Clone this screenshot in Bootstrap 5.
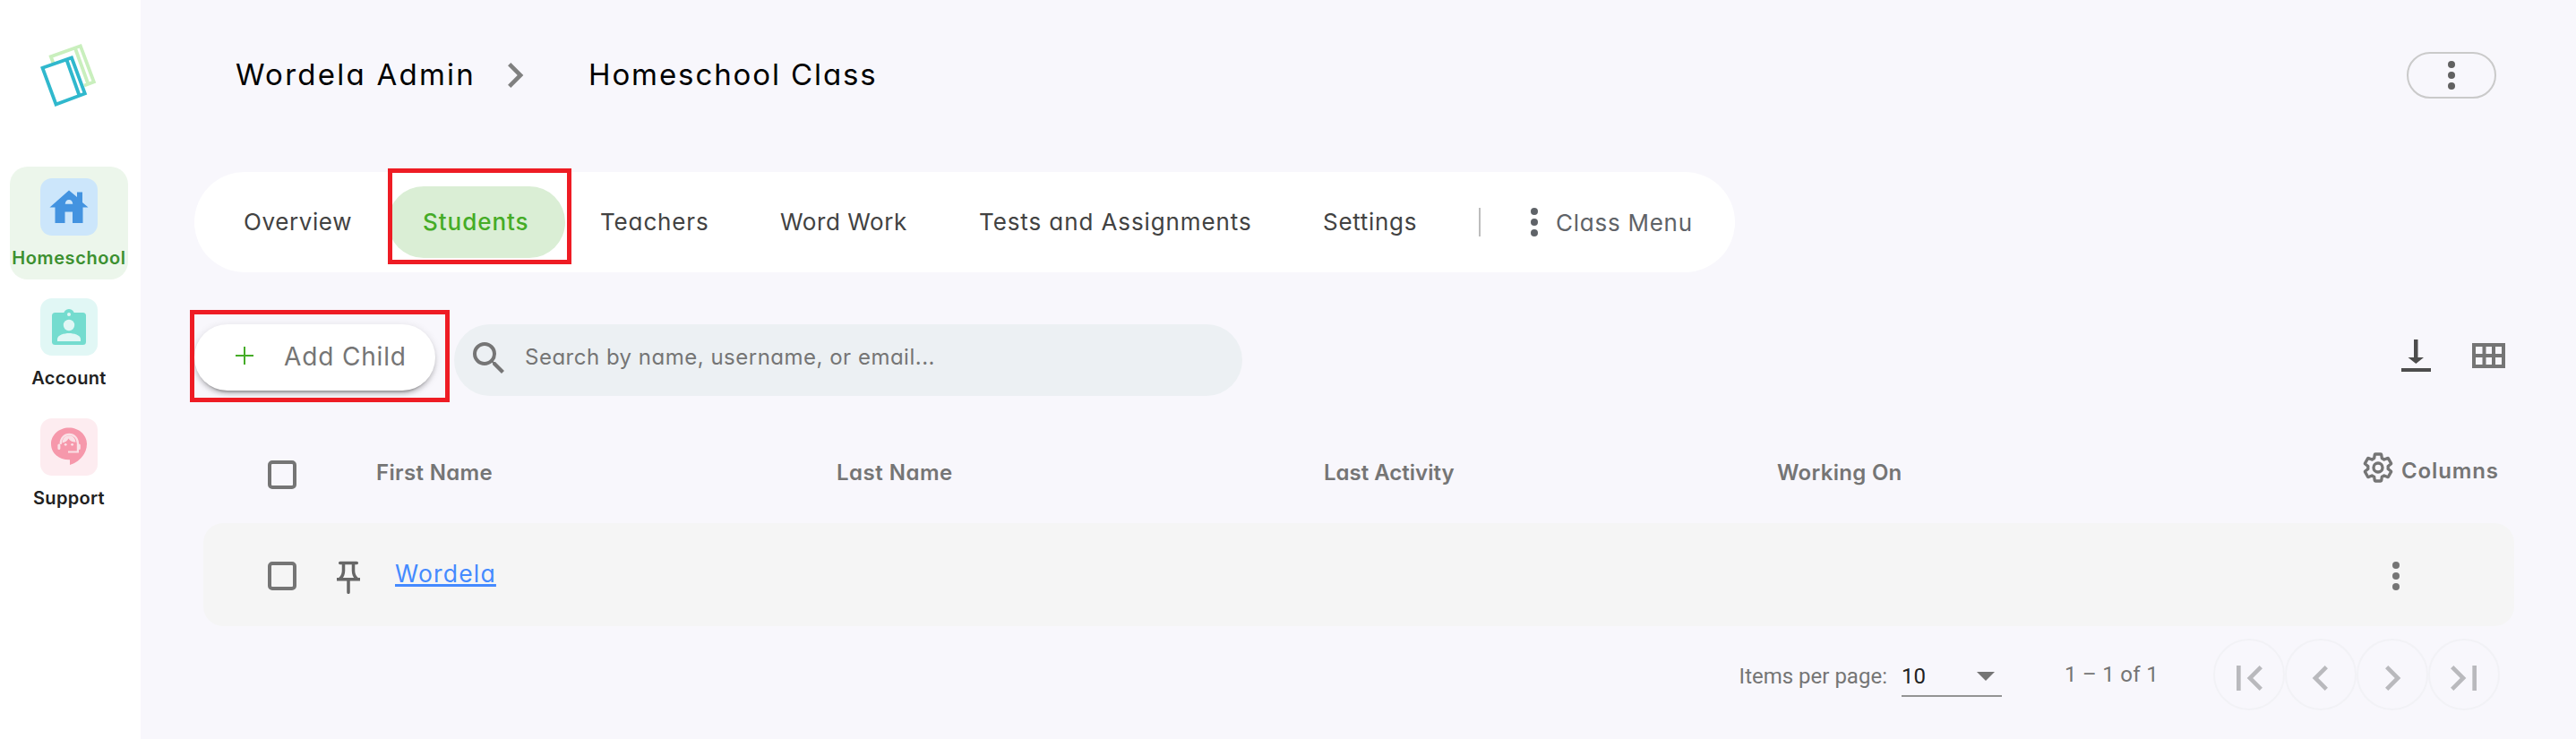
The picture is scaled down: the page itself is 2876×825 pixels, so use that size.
<!DOCTYPE html>
<html lang="en">
<head>
<meta charset="utf-8">
<meta name="viewport" content="width=device-width, initial-scale=1">
<title>Wordela Admin</title>
<link href="https://cdn.jsdelivr.net/npm/bootstrap@5.3.0/dist/css/bootstrap.min.css" rel="stylesheet">
<style>
body{font-family:Inter,"Open Sans",sans-serif;font-feature-settings:"cv11";background:#f8f7fc;color:#757575;line-height:1.2;height:825px;overflow:hidden;white-space:nowrap}
svg{display:block;flex-shrink:0}
a{color:inherit;text-decoration:none}
.side{width:157px;background:#fff}
.side-item{width:132px;height:126px;padding-top:13px;border-radius:20px;font-size:20px;font-weight:600;color:#212121;letter-spacing:.3px;margin:0 13px 8px 11px}
.side-item.active{background:#ecf6eb;color:#3c9030;letter-spacing:.6px}
.tile{width:64px;height:64px;border-radius:13px}
.side-label{height:49px}
.crumbs{margin-top:58px;height:52px;color:#000;font-size:33px}
.crumb-a{width:284px;margin-left:106px;letter-spacing:2.25px}
.crumb-b{margin-left:54px;letter-spacing:1.9px}
.more-btn{width:100px;height:52px;border:2px solid #cacaca;border-radius:26px;margin-right:89px;color:#616161}
.tabs{margin:82px 0 0 60px;width:1720px;height:112px;border-radius:56px;background:#fff;font-size:26px;color:#424242}
.tab-on{position:relative;width:198px;height:80px;border-radius:40px;background:#daeed5;color:#45ac27;font-weight:500;letter-spacing:.95px;padding-left:39px}
.callout{position:absolute;border:5px solid #ee1c24;z-index:2}
.tabs .callout{left:0;top:-20px;width:205px;height:107px}
.rule{width:2px;height:32px;background:#bdbdbd}
.tools{margin:58px 0 0 60px;height:80px}
.add{position:relative;width:269px;height:74px;border-radius:37px;background:#fff;font-size:28px;letter-spacing:.85px;box-shadow:0 6px 2px -4px rgba(0,0,0,.2),0 4px 4px rgba(0,0,0,.14),0 2px 10px rgba(0,0,0,.12)}
.add .callout{left:-5px;top:-16px;width:290px;height:103px}
.search{width:880px;height:80px;border-radius:40px;background:#ecf0f3;margin-left:21px;padding:0 0 5px 15px;font-size:24px;letter-spacing:.5px}
.thead-row{margin:59px 0 0 71px;height:55px;font-size:24px;font-weight:600;padding-left:71px}
.check{width:32px;height:32px;border:4px solid #757575;border-radius:5px;position:relative;top:1px}
.cell-first{width:514px;letter-spacing:.35px}
.cell-last{width:544px;letter-spacing:.5px}
.cell-act{width:506px;letter-spacing:0}
.cell-work{width:653px;letter-spacing:.3px}
.data-row{margin:28px 0 0 70px;width:2580px;height:114.5px;border-radius:22px;background:#f5f5f5;padding-left:72px}
.data-row a{color:#448aff;font-size:26.5px;letter-spacing:1.2px;text-decoration:underline;text-decoration-thickness:3px;text-underline-offset:2px}
.data-row .check{top:2px}
.pager{margin:14.5px 85px 0 0;height:80px;font-family:Roboto,sans-serif;font-size:24px}
.per{width:112px;border-bottom:2px solid #949494;height:40px;color:#212121;padding-top:3px}
.pg{width:80px;height:80px;border:2px solid #f2f2f6;border-radius:50%;color:#b9b9bd;padding-top:8px}
</style>
</head>
<body class="d-flex">
<aside class="side d-flex flex-column flex-shrink-0">
  <svg width="157" height="186" fill="none" stroke-width="3.8">
    <path stroke="#c9efbd" d="M59.5 70.5 56.8 63.2 89.8 51.3 104.8 91.5 94 95.5M84 54 98.5 94"/>
    <path fill="#fff" stroke="#30b8cd" d="M47.5 75.8 80 64.5 94.8 104.5 62.5 116.5z"/><path stroke="#30b8cd" d="M74.5 67 88.5 106.5"/>
  </svg>
  <a href="#" class="side-item active d-flex flex-column align-items-center">
    <svg class="tile" style="background:#cce6fb" viewBox="0 0 64 64"><path fill="#4393e0" fill-rule="evenodd" d="M32 13.5 41 21V15.5H47V27L53.5 32.5H47.5V50H36V37.5H27.500V50H16.500V32.500H10.500ZM27.700 28.700H36.300Q35.800 24 32 24T27.700 28.700Z"/></svg>
    <span class="side-label d-flex align-items-center">Homeschool</span>
  </a>
  <a href="#" class="side-item d-flex flex-column align-items-center">
    <svg class="tile" style="background:#e1f7f5" viewBox="0 0 64 64"><g fill="#74dccf"><rect x="13" y="16" width="38" height="36" rx="3.500"/><circle cx="32" cy="18" r="6"/></g><g fill="#e1f7f5"><circle cx="32" cy="18" r="2"/><circle cx="32" cy="30" r="6.200"/><path d="M19 48v-2.500c0-4.500 8-6.500 13-6.500s13 2 13 6.500V48z"/></g></svg>
    <span class="side-label d-flex align-items-center">Account</span>
  </a>
  <a href="#" class="side-item d-flex flex-column align-items-center">
    <svg class="tile" style="background:#fdecf0" viewBox="0 0 64 64"><path fill="#f698ab" d="M32 10.500c11 0 20 8 20 18 0 11-8 20-19 23.500v-5.700c-12 .2-21-7-21-17.800 0-10 9-18 20-18z"/><g fill="none" stroke="#fae1e6" stroke-width="2.200"><path d="M22.700 29v-1a9.600 10.200 0 0 1 19.200 0v9.500H31"/><path stroke-width="3" stroke-linecap="round" d="M20.900 30v3.500M43.300 30v3.500"/></g><path fill="#fae1e6" d="M24.500 27.500C25 22 28 19.300 32 19.300s7 2.700 7.500 7.200c-3 .3-6.500-1-8-4-1.200 2.700-3.500 4.300-7 5z"/><g fill="#fae1e6"><circle cx="28.200" cy="29.300" r="1.400"/><circle cx="35.600" cy="29.300" r="1.400"/></g></svg>
    <span class="side-label d-flex align-items-center">Support</span>
  </a>
</aside>
<main class="flex-grow-1 d-flex flex-column">
  <header class="crumbs d-flex align-items-center">
    <span class="crumb-a">Wordela Admin</span>
    <svg width="56" height="56" viewBox="0 0 24 24" fill="#808080"><path d="M10 6 8.590 7.410 13.170 12l-4.580 4.590L10 18l6-6z"/></svg>
    <span class="crumb-b">Homeschool Class</span>
    <a href="#" class="more-btn ms-auto d-flex align-items-center justify-content-center"><svg width="8" height="32" fill="currentColor"><circle cx="4" cy="4" r="4"/><circle cx="4" cy="16" r="4"/><circle cx="4" cy="28" r="4"/></svg></a>
  </header>
  <nav class="tabs d-flex align-items-center">
    <a href="#" style="width:216px;padding-left:55px;letter-spacing:.6px">Overview</a>
    <a href="#" class="tab-on d-flex align-items-center">Students<span class="callout"></span></a>
    <a href="#" style="width:240px;padding-left:39px;letter-spacing:.85px">Teachers</a>
    <a href="#" style="width:222px;letter-spacing:.55px">Word Work</a>
    <a href="#" style="width:384px;letter-spacing:.9px">Tests and Assignments</a>
    <a href="#" style="width:174px;letter-spacing:.7px">Settings</a>
    <span class="rule"></span>
    <a href="#" class="d-flex align-items-center" style="color:#5f6368;letter-spacing:.75px;margin-left:56px"><svg width="8" height="32" fill="currentColor"><circle cx="4" cy="4" r="4"/><circle cx="4" cy="16" r="4"/><circle cx="4" cy="28" r="4"/></svg><span style="margin-left:20px;padding-top:1px">Class Menu</span></a>
  </nav>
  <div class="tools d-flex align-items-start">
    <a href="#" class="add d-flex align-items-center">
      <svg width="20" height="20" style="margin:-5px 34px 0 46px" stroke="#45ac27" stroke-width="2"><path d="M10 0V20M0 10H20"/></svg>Add Child<span class="callout"></span>
    </a>
    <div class="search d-flex align-items-center">
      <svg width="48" height="48" viewBox="0 0 24 24" fill="#757575"><path d="M15.500 14h-.79l-.28-.27A6.471 6.471 0 0 0 16 9.500 6.500 6.500 0 1 0 9.500 16c1.610 0 3.090-.59 4.230-1.570l.27.28v.79l5 4.990L20.490 19l-4.990-5zm-6 0C7.010 14 5 11.990 5 9.500S7.010 5 9.500 5 14 7.010 14 9.500 11.990 14 9.500 14z"/></svg>
      <span style="margin-left:16px">Search by name, username, or email...</span>
    </div>
    <div class="ms-auto d-flex" style="padding:17px 79px 0 0">
      <svg width="33" height="36" fill="#4d4d4d"><path d="M14 0h4.500v20H25l-8.700 7L7.500 20H14zM0 32h33v4H0z"/></svg>
      <svg width="37" height="28" style="margin:4px 0 0 46px" fill="none" stroke="#757575" stroke-width="4"><path d="M2 2H35V26H2ZM2 14H35M13.500 2V26M24 2V26"/></svg>
    </div>
  </div>
  <div class="thead-row d-flex align-items-center">
    <span class="check"></span>
    <span class="cell-first" style="margin-left:89px">First Name</span>
    <span class="cell-last">Last Name</span>
    <span class="cell-act">Last Activity</span>
    <span class="cell-work">Working On</span>
    <svg width="36" height="36" viewBox="1.200 1.200 21.600 21.600" fill="none" stroke="#757575" style="margin-top:-14px"><path stroke-width="2.200" stroke-linejoin="round" transform="translate(1.200 1.200) scale(.9)" d="M19.430 12.980c.04-.32.07-.64.07-.98s-.03-.66-.07-.98l2.110-1.650c.19-.15.24-.42.12-.64l-2-3.460a.5.5 0 0 0-.61-.22l-2.490 1c-.52-.4-1.080-.73-1.690-.98l-.38-2.650A.488.488 0 0 0 14 2h-4c-.25 0-.46.18-.49.42l-.38 2.650c-.61.25-1.170.59-1.690.98l-2.490-1c-.23-.08-.48 0-.61.22l-2 3.460c-.13.22-.07.49.12.64l2.110 1.650c-.04.32-.07.65-.07.98s.03.66.07.98l-2.110 1.650c-.19.15-.24.42-.12.64l2 3.460c.12.22.39.3.61.22l2.490-1c.52.4 1.080.73 1.690.98l.38 2.650c.03.24.24.42.49.42h4c.25 0 .46-.18.49-.42l.38-2.650c.61-.25 1.170-.59 1.690-.98l2.490 1c.23.09.49 0 .61-.22l2-3.460c.12-.22.07-.49-.12-.64z"/><circle cx="12" cy="12" r="3" stroke-width="2"/></svg>
    <span style="margin:-5px 0 0 8px;letter-spacing:.85px">Columns</span>
  </div>
  <div class="data-row d-flex align-items-center">
    <span class="check"></span>
    <svg width="26" height="37" style="margin:7px 39px 0 45px" fill="none" stroke="#666" stroke-width="3.500"><path stroke-linecap="round" d="M3.700 2.500H22.300M13 22V35.300"/><path d="M7.500 3V11Q7.500 17 3.500 20M18.500 3V11Q18.500 17 22.500 20M0 20.700H26"/></svg>
    <a href="#">Wordela</a>
    <svg width="8" height="32" fill="#757575" class="ms-auto" style="margin:4px 128px 0 0"><circle cx="4" cy="4" r="4"/><circle cx="4" cy="16" r="4"/><circle cx="4" cy="28" r="4"/></svg>
  </div>
  <div class="pager d-flex align-items-center justify-content-end">
    <span style="margin:4px 16px 0 0">Items per page:</span>
    <span class="per d-flex justify-content-between" style="margin-top:10px">10<svg width="20" height="10" style="margin:9px 8px 0 0" fill="#757575"><path d="M0 0H20L10 10z"/></svg></span>
    <span style="margin:0 61px 0 70px;letter-spacing:.3px">1 – 1 of 1</span>
    <a href="#" class="pg d-flex align-items-center justify-content-center"><svg width="56" height="56" viewBox="0 0 24 24" fill="currentColor"><path d="M18.410 16.590 13.820 12l4.590-4.590L17 6l-6 6 6 6zM6 6h2v12H6z"/></svg></a>
    <a href="#" class="pg d-flex align-items-center justify-content-center"><svg width="56" height="56" viewBox="0 0 24 24" fill="currentColor"><path d="M15.410 7.410 14 6l-6 6 6 6 1.410-1.410L10.830 12z"/></svg></a>
    <a href="#" class="pg d-flex align-items-center justify-content-center"><svg width="56" height="56" viewBox="0 0 24 24" fill="currentColor"><path d="M10 6 8.590 7.410 13.170 12l-4.580 4.590L10 18l6-6z"/></svg></a>
    <a href="#" class="pg d-flex align-items-center justify-content-center"><svg width="56" height="56" viewBox="0 0 24 24" fill="currentColor"><path d="M5.590 7.410 10.180 12l-4.590 4.590L7 18l6-6-6-6zM16 6h2v12h-2z"/></svg></a>
  </div>
</main>
<script src="https://cdn.jsdelivr.net/npm/bootstrap@5.3.0/dist/js/bootstrap.bundle.min.js"></script>
</body>
</html>
